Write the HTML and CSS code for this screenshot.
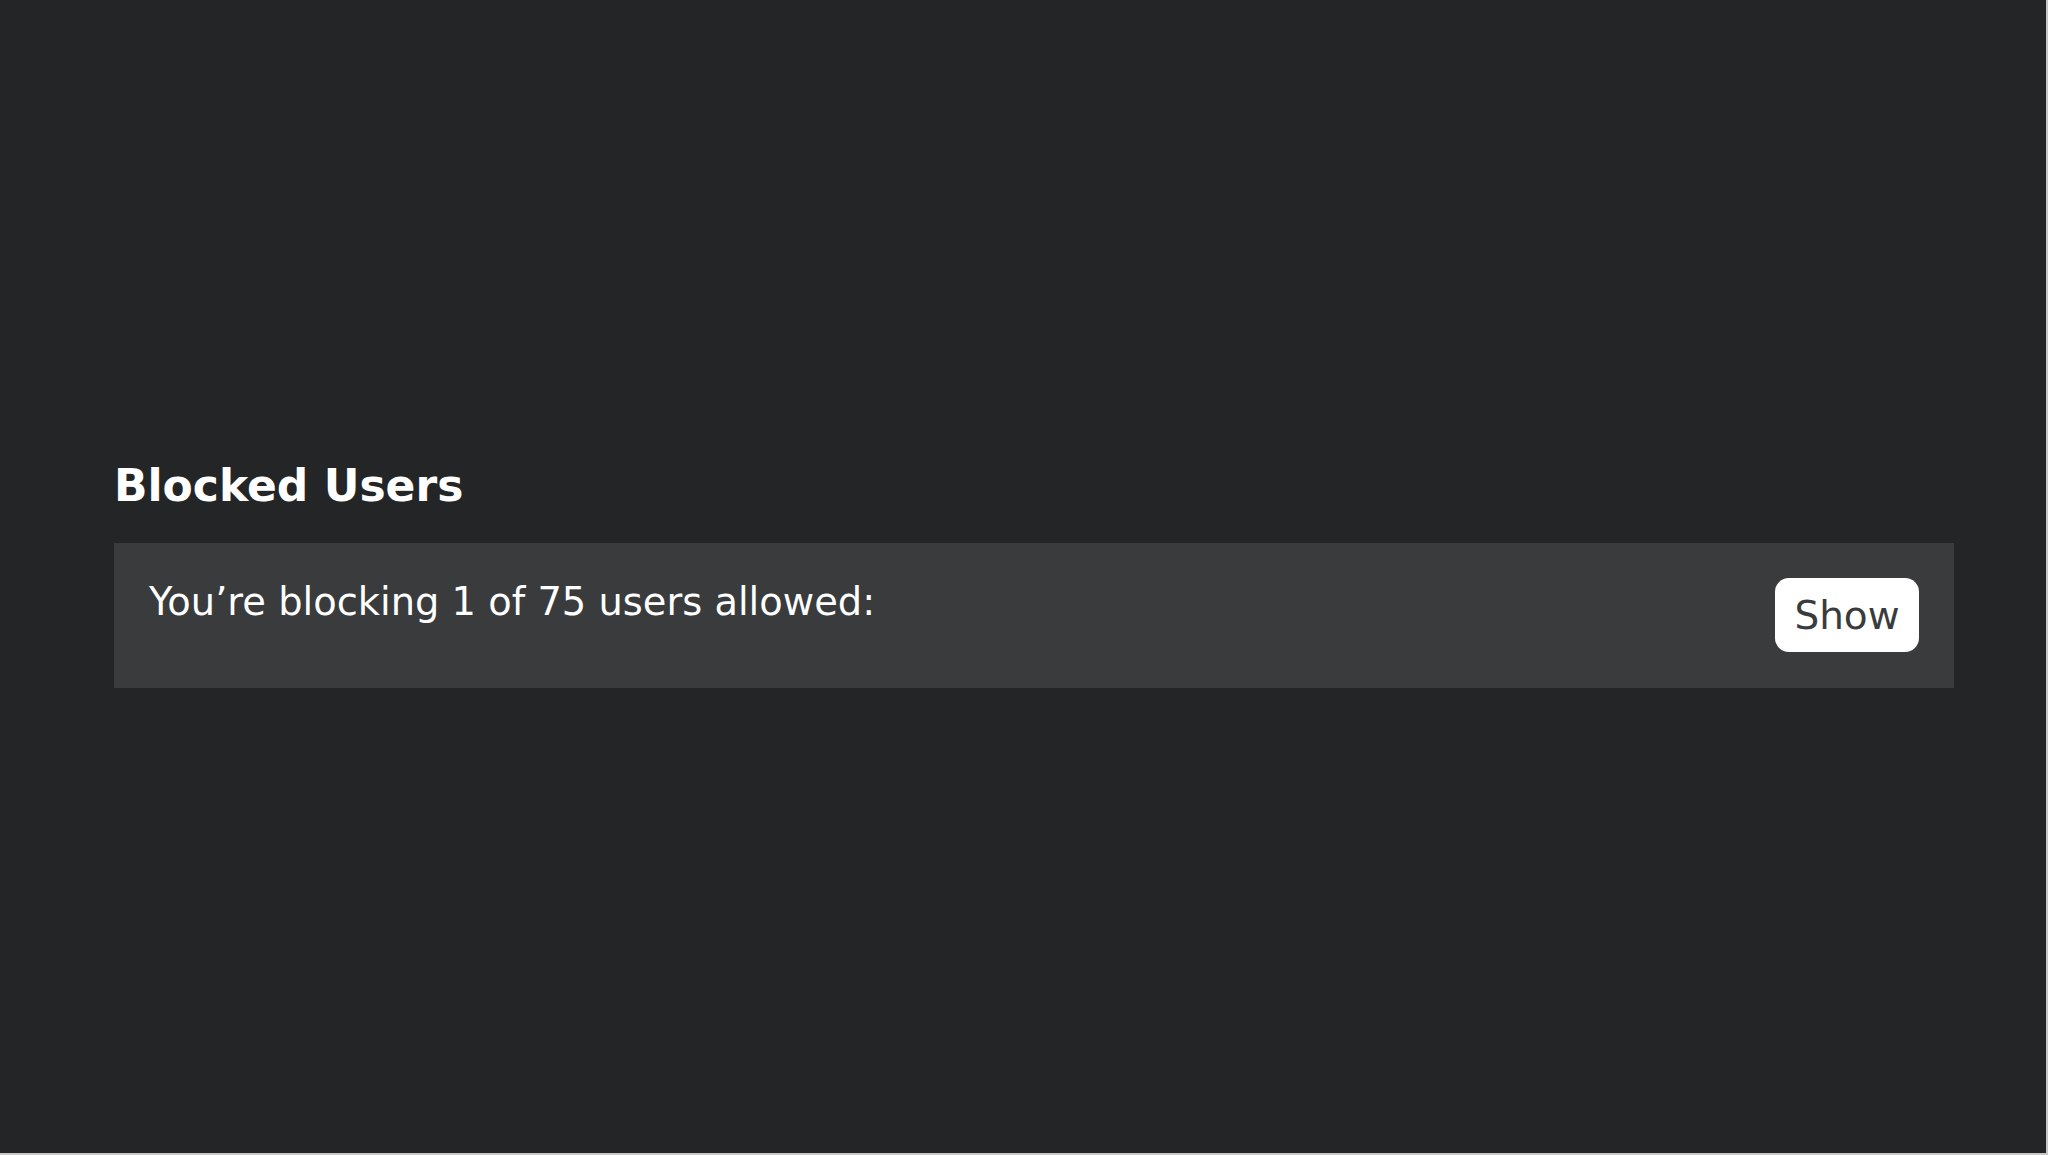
FILE: index.html
```html
<!DOCTYPE html>
<html>
<head>
<meta charset="utf-8">
<link rel="stylesheet" href="styles.css">
</head>
<body>
<div class="screen">
  <section class="blocked">
    <h2 class="blocked-title">Blocked Users</h2>
    <div class="blocked-panel">
      <p class="blocked-text">You’re blocking 1 of 75 users allowed:</p>
      <button class="show-btn">Show</button>
    </div>
  </section>
</div>
</body>
</html>
```
FILE: styles.css
```css
html, body {
  margin: 0;
  padding: 0;
  background: #c8c8c8;
}
.screen {
  width: 2046px;
  height: 1153px;
  background: #232527;
  box-sizing: border-box;
  padding: 460px 92px 0 114px;
  font-family: "DejaVu Sans", "Liberation Sans", sans-serif;
  color: #ffffff;
}
.blocked-title {
  margin: 0 0 31px 0;
  font-size: 44px;
  line-height: 52px;
  font-weight: 700;
}
.blocked-panel {
  background: #393b3d;
  height: 145px;
  box-sizing: border-box;
  padding: 35px 35px 0 35px;
  display: flex;
  justify-content: space-between;
  align-items: flex-start;
}
.blocked-text {
  margin: 2px 0 0 0;
  font-size: 38.4px;
  line-height: 44px;
}
.show-btn {
  width: 144px;
  height: 74px;
  border: none;
  border-radius: 14px;
  background: #ffffff;
  color: #393b3d;
  font-family: inherit;
  font-size: 39px;
  padding: 0;
}
```
